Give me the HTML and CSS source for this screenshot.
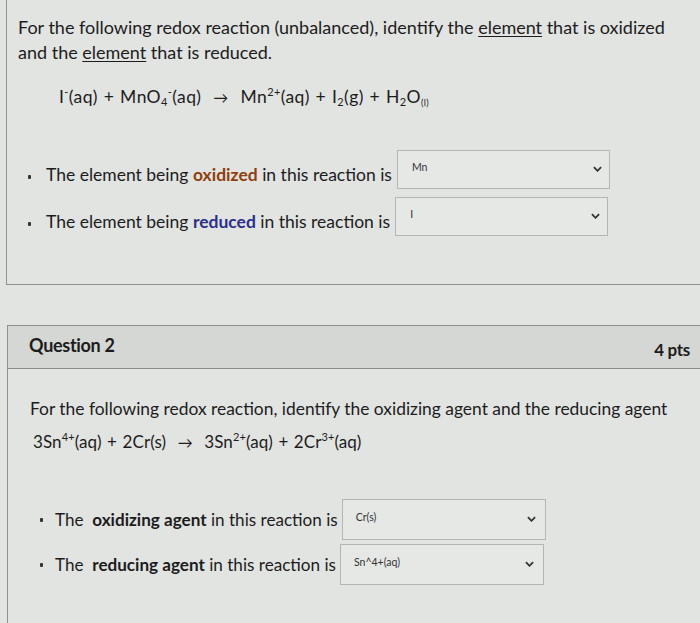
FILE: index.html
```html
<!DOCTYPE html>
<html>
<head>
<meta charset="utf-8">
<link rel="stylesheet" href="styles.css">
</head>
<body>
<div class="card q1">
  <p class="prompt">For the following redox reaction (unbalanced), identify the <u>element</u> that is oxidized<br>and the <u>element</u> that is reduced.</p>
  <p class="eq eq1">I<sup>-</sup>(<i>aq</i>) + MnO<sub>4</sub><sup class="tight">-</sup>(<i>aq</i>) <span class="arr">→</span> Mn<sup>2+</sup>(<i>aq</i>) + I<sub>2</sub>(<i>g</i>) + H<sub>2</sub>O<sub class="ph">(l)</sub></p>
  <ul class="answers a1">
    <li><span class="bul"></span><span class="lbl">The element being <b class="ox">oxidized</b> in this reaction is</span><span class="sel s1"><span class="val">Mn</span><svg class="chev" viewBox="0 0 10 6"><path d="M1 1l4 4 4-4" fill="none" stroke="#333" stroke-width="2"/></svg></span></li>
    <li><span class="bul"></span><span class="lbl">The element being <b class="red">reduced</b> in this reaction is</span><span class="sel s1"><span class="val">I</span><svg class="chev" viewBox="0 0 10 6"><path d="M1 1l4 4 4-4" fill="none" stroke="#333" stroke-width="2"/></svg></span></li>
  </ul>
</div>
<div class="card q2">
  <div class="head"><span class="title">Question 2</span><span class="pts">4 pts</span></div>
  <div class="body">
    <p class="prompt2">For the following redox reaction, identify the oxidizing agent and the reducing agent</p>
    <p class="eq eq2">3Sn<sup>4+</sup>(<i>aq</i>) + 2Cr(s) <span class="arr">→</span> 3Sn<sup>2+</sup>(<i>aq</i>) + 2Cr<sup>3+</sup>(<i>aq</i>)</p>
    <ul class="answers a2">
      <li><span class="bul"></span><span class="lbl">The&nbsp; <b>oxidizing agent</b> in this reaction is</span><span class="sel s2"><span class="val">Cr(s)</span><svg class="chev" viewBox="0 0 10 6"><path d="M1 1l4 4 4-4" fill="none" stroke="#333" stroke-width="2"/></svg></span></li>
      <li><span class="bul"></span><span class="lbl">The&nbsp; <b>reducing agent</b> in this reaction is</span><span class="sel s2"><span class="val">Sn^4+(aq)</span><svg class="chev" viewBox="0 0 10 6"><path d="M1 1l4 4 4-4" fill="none" stroke="#333" stroke-width="2"/></svg></span></li>
    </ul>
  </div>
</div>
</body>
</html>
```
FILE: styles.css
```css
html, body {
  margin: 0;
  padding: 0;
  background: #e2e4e2;
  font-family: Lato, "Liberation Sans", sans-serif;
  color: #1c1c1c;
  width: 700px;
  height: 623px;
  overflow: hidden;
}
p { margin: 0; }
.card {
  border-left: 1px solid #8e908e;
}
.q1 {
  margin-left: 6px;
  height: 285px;
  border-bottom: 1px solid #8e908e;
  box-sizing: border-box;
  padding: 15px 0 0 11px;
}
.prompt {
  font-size: 18px;
  line-height: 25px;
}
.prompt u { text-underline-offset: 2px; }
.eq {
  font-size: 17.5px;
  line-height: 22px;
  letter-spacing: 0.1px;
  word-spacing: 1px;
}
.eq i { font-style: normal; }
.eq sup { font-size: 11px; vertical-align: 7px; line-height: 0; }
.eq sub { font-size: 11px; vertical-align: -3px; line-height: 0; }
.eq .ph { font-size: 9px; }
.arr { margin: 0 6px; font-size: 15px; }
.eq1 { margin: 21px 0 0 41px; letter-spacing: 0.4px; }
.answers {
  list-style: none;
  margin: 0;
  padding: 0;
}
.answers li {
  display: flex;
  align-items: center;
  white-space: pre;
}
.lbl {
  font-size: 17.5px;
  line-height: 22px;
}
.ox { color: #8e3f0c; }
.red { color: #2a2e8c; }
.bul {
  width: 3px;
  height: 4px;
  background: #333;
  border-radius: 1px;
}
.a1 { margin: 42px 0 0 10px; }
.a1 li + li { margin-top: 8px; }
.a1 .lbl { padding-top: 11px; margin-left: 15px; }
.a1 .bul { margin-top: 14px; }
.sel {
  display: flex;
  justify-content: space-between;
  align-items: center;
  box-sizing: border-box;
  border: 1px solid #b4b6b4;
  background: #e6e8e6;
}
.s1 { width: 213px; height: 39px; padding: 0 7px 5px 14px; margin-left: 5px; }
.val {
  font-size: 10.5px;
  color: #333;
}
.chev { width: 9px; height: 6px; margin-top: 4px; }
.q2 {
  margin-left: 7px;
  margin-top: 40px;
  border-top: 1px solid #8e908e;
  height: 297px;
}
.head {
  height: 42px;
  background: #d5d7d5;
  border-bottom: 1px solid #8a8c8a;
  display: flex;
  justify-content: space-between;
  padding: 0 10px 0 21px;
}
.title {
  font-weight: bold;
  font-size: 18px;
  line-height: 22px;
  letter-spacing: -0.3px;
  margin-top: 8px;
}
.pts {
  font-weight: bold;
  font-size: 17px;
  line-height: 22px;
  letter-spacing: -0.3px;
  margin-top: 13px;
}
.body {
  padding: 29px 0 0 22px;
}
.prompt2 {
  font-size: 17.4px;
  line-height: 22px;
}
.eq2 { margin: 11px 0 0 3px; font-size: 17px; }
.a2 { margin: 46px 0 0 10px; }
.a2 li + li { margin-top: 4px; }
.a2 .lbl { font-size: 17.1px; margin-left: 12px; }
.s2 { width: 204px; height: 41px; padding: 0 9px 6px 13px; margin-left: 4px; }
```
